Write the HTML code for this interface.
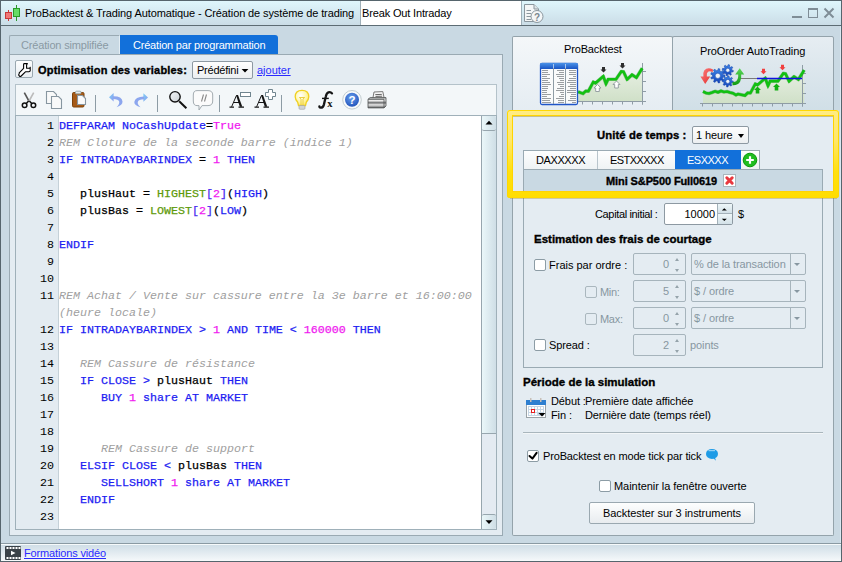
<!DOCTYPE html>
<html><head><meta charset="utf-8">
<style>
*{box-sizing:border-box;margin:0;padding:0}
html,body{width:842px;height:562px;overflow:hidden;background:#c9d9e3;font-family:"Liberation Sans",sans-serif;font-size:11px;color:#000}
.a{position:absolute}
.t{position:absolute;white-space:pre;line-height:13px;font-size:11px}
.b{font-weight:bold;-webkit-text-stroke:0.35px #000}
/* frame */
#frame{left:0;top:0;width:842px;height:562px;border:1px solid #56656d}
#title{left:1px;top:1px;width:840px;height:25px;background:linear-gradient(#dff6fc,#cbdde7);border-bottom:1px solid #5d6c74}
#tfield{left:360px;top:1px;width:162px;height:24px;background:#fff;border-left:1px solid #9fb0b9;border-right:1px solid #9fb0b9}
/* left panel */
#lpanel{left:9px;top:54px;width:494px;height:482px;background:#e4ecf2;border:1px solid #9aaab3}
#tab1{left:9px;top:35px;width:111px;height:19px;background:#c9d9e3;border:1px solid #9aaab3;border-bottom:none;border-right:1px solid #e3edf3;border-top-left-radius:2px}
#tab2{left:120px;top:35px;width:158px;height:19px;background:#1270da;border-top-right-radius:3px}
#wrench{left:15px;top:60px;width:18px;height:18px;border:1px solid #9aa8b0;border-radius:2px;background:linear-gradient(#fdfefe,#e9eef2)}
#dd1{left:192px;top:61px;width:61px;height:18px;border:1px solid #8d99a2;border-radius:2px;background:linear-gradient(#fefefe,#eceff1)}
#toolbar{left:15px;top:84px;width:482px;height:32px;background:#f3f7f9;border:1px solid #b4c2ca}
#editor{left:15px;top:115px;width:482px;height:415px;background:#fff;border:1px solid #9fb0b9}
#gutter{left:16px;top:116px;width:43px;height:413px;background:#e3ebf1;border-right:1px solid #c5d1d8}
#code{left:59px;top:116px;width:422px;height:413px;font-family:"Liberation Mono",monospace;font-size:11.67px}
.ln{position:absolute;left:16px;width:38px;text-align:right;white-space:pre;font-family:"Liberation Mono",monospace;font-size:11.67px;line-height:17px;color:#000}
.cl{position:absolute;left:59px;white-space:pre;font-family:"Liberation Mono",monospace;font-size:11.67px;line-height:17px;color:#000;-webkit-text-stroke:0.25px}
.kw{color:#1d1df2}.nm{color:#f019f0}.cm{color:#a0a0a0;font-style:italic;-webkit-text-stroke:0}.fn{color:#5e9a0a}.br{color:#4a2cf0}
#sb{left:481px;top:116px;width:15px;height:413px;background:#e4ebf2;border-left:1px solid #97a6ae}
/* right panel */
#rtab1{left:512px;top:36px;width:161px;height:80px;background:linear-gradient(#f4f7f9,#e4ecf2);border:1px solid #94a3ab;border-bottom:none;border-radius:2px 2px 0 0}
#rtab2{left:672px;top:36px;width:162px;height:80px;background:linear-gradient(#e6edf2,#cfdee6);border:1px solid #94a3ab;border-bottom:1px solid #94a3ab;border-radius:2px 2px 0 0}
#rpanel{left:512px;top:110px;width:322px;height:426px;background:#e4ecf2;border:1px solid #94a3ab;border-top:none;border-radius:0 0 2px 2px}
#yellow{left:507px;top:110px;width:332px;height:88px;border:6px solid #ffd90a;border-radius:3px}
.tri{width:0;height:0;border-left:3.5px solid transparent;border-right:3.5px solid transparent;border-top:4px solid #000}
/* status */
#status{left:1px;top:543px;width:840px;height:18px;background:linear-gradient(#f6fafb 0,#f6fafb 1px,#d0dee7 1px,#f3f7f9 16px,#fbfdfd 17px);border-top:1px solid #8a9aa3}

.cb{position:absolute;width:12px;height:12px;border:1px solid #8c9ca5;border-radius:2px;background:#fff}
.cbd{position:absolute;width:12px;height:12px;border:1px solid #aab7be;border-radius:2px;background:#e4ecf2}
.sp{position:absolute;width:53px;height:22px;border:1px solid #a6b4bc;border-radius:2px}
.spu{position:absolute;width:0;height:0;border-left:2.5px solid transparent;border-right:2.5px solid transparent;border-bottom:3px solid #95a3ab}
.spd{position:absolute;width:0;height:0;border-left:2.5px solid transparent;border-right:2.5px solid transparent;border-top:3px solid #95a3ab}
.ddd{position:absolute;width:115px;height:22px;border:1px solid #a6b4bc;border-radius:2px}
.dis{color:#8797a1}
</style></head><body>
<div class="a" id="frame"></div>
<div class="a" id="title"></div>
<div class="a" id="tfield"></div>
<div class="t" style="left:25px;top:7px;letter-spacing:-0.11px">ProBacktest &amp; Trading Automatique - Création de système de trading</div>
<div class="t" style="left:362px;top:7px;letter-spacing:-0.15px">Break Out Intraday</div>

<!--TITLEICONS-->
<svg class="a" style="left:4px;top:4px" width="18" height="18" viewBox="0 0 18 18">
 <line x1="4.5" y1="6" x2="4.5" y2="17" stroke="#c83a3a" stroke-width="1"/>
 <rect x="1.5" y="8.5" width="6" height="6" fill="#f07878" stroke="#c83a3a"/>
 <line x1="12.5" y1="1" x2="12.5" y2="17" stroke="#2a9a2a" stroke-width="1"/>
 <rect x="9.5" y="4.5" width="6" height="8" fill="#66dd66" stroke="#2a9a2a"/>
</svg>
<svg class="a" style="left:524px;top:4px" width="21" height="19" viewBox="0 0 21 19">
 <path d="M0.5 0.5 H10 L14.5 5 V17.5 H0.5 Z" fill="#f4f6f7" stroke="#8b979e"/>
 <path d="M10 0.5 V5 H14.5" fill="#dfe4e7" stroke="#8b979e"/>
 <line x1="2.5" y1="6.5" x2="7" y2="6.5" stroke="#8b979e"/>
 <line x1="2.5" y1="9.5" x2="7" y2="9.5" stroke="#8b979e"/>
 <line x1="2.5" y1="12.5" x2="7" y2="12.5" stroke="#8b979e"/>
 <line x1="2.5" y1="15.5" x2="7" y2="15.5" stroke="#8b979e"/>
 <circle cx="13" cy="12.5" r="6" fill="#f4f6f7" stroke="#8b979e"/>
 <text x="13" y="16.5" font-family="Liberation Sans" font-size="10" font-weight="bold" fill="#7b878e" text-anchor="middle">?</text>
</svg>
<div class="a" style="left:792px;top:16px;width:10px;height:2px;background:#7f8d96"></div>
<div class="a" style="left:808px;top:8px;width:10px;height:10px;border:1px solid #7f8d96;border-top-width:2px"></div>
<svg class="a" style="left:823px;top:7px" width="12" height="12" viewBox="0 0 12 12"><path d="M1.5 1.5 L10.5 10.5 M10.5 1.5 L1.5 10.5" stroke="#7f8d96" stroke-width="2"/></svg>

<div class="a" id="lpanel"></div>
<div class="a" id="tab1"></div>
<div class="a" id="tab2"></div>
<div class="t" style="left:21px;top:39px;color:#8a9aa4;letter-spacing:-0.16px">Création simplifiée</div>
<div class="t" style="left:133px;top:39px;color:#fff;letter-spacing:-0.2px">Création par programmation</div>
<div class="a" id="wrench"></div>
<div class="t b" style="left:38px;top:64px;letter-spacing:0.2px">Optimisation des variables:</div>
<div class="a" id="dd1"></div>
<div class="t" style="left:197px;top:64px;letter-spacing:-0.22px">Prédéfini</div>
<div class="t" style="left:257px;top:64px;color:#2a2aff;text-decoration:underline;text-underline-offset:1px">ajouter</div>
<div class="a" id="toolbar"></div>
<div class="a" id="editor"></div>
<div class="a" id="gutter"></div>
<div class="a" id="sb"></div>
<div class="a" style="left:482px;top:116px;width:14px;height:15px;border-bottom:1px solid #97a6ae;border-radius:2px;background:linear-gradient(90deg,#eaf7f9,#cfdee6)"></div>
<div class="a" style="left:482px;top:131px;width:14px;height:303px;border-bottom:1px solid #97a6ae;background:linear-gradient(90deg,#eaf7f9,#cfdee6)"></div>
<div class="a" style="left:482px;top:514px;width:14px;height:15px;border-top:1px solid #97a6ae;border-radius:2px;background:linear-gradient(90deg,#eaf7f9,#cfdee6)"></div>

<!--CODE-->
<div class="ln" style="top:118px">1</div>
<div class="cl" style="top:118px"><span class="kw">DEFPARAM NoCashUpdate</span>=<span class="nm">True</span></div>
<div class="ln" style="top:135px">2</div>
<div class="cl" style="top:135px"><span class="cm">REM Cloture de la seconde barre (indice 1)</span></div>
<div class="ln" style="top:152px">3</div>
<div class="cl" style="top:152px"><span class="kw">IF INTRADAYBARINDEX</span> = <span class="nm">1</span> <span class="kw">THEN</span></div>
<div class="ln" style="top:169px">4</div>
<div class="ln" style="top:186px">5</div>
<div class="cl" style="top:186px">   plusHaut = <span class="fn">HIGHEST</span><span class="br">[</span><span class="nm">2</span><span class="br">]</span>(<span class="kw">HIGH</span>)</div>
<div class="ln" style="top:203px">6</div>
<div class="cl" style="top:203px">   plusBas = <span class="fn">LOWEST</span><span class="br">[</span><span class="nm">2</span><span class="br">]</span>(<span class="kw">LOW</span>)</div>
<div class="ln" style="top:220px">7</div>
<div class="ln" style="top:237px">8</div>
<div class="cl" style="top:237px"><span class="kw">ENDIF</span></div>
<div class="ln" style="top:254px">9</div>
<div class="ln" style="top:271px">10</div>
<div class="ln" style="top:288px">11</div>
<div class="cl" style="top:288px"><span class="cm">REM Achat / Vente sur cassure entre la 3e barre et 16:00:00</span></div>
<div class="cl" style="top:305px"><span class="cm">(heure locale)</span></div>
<div class="ln" style="top:322px">12</div>
<div class="cl" style="top:322px"><span class="kw">IF INTRADAYBARINDEX &gt;</span> <span class="nm">1</span> <span class="kw">AND TIME &lt;</span> <span class="nm">160000</span> <span class="kw">THEN</span></div>
<div class="ln" style="top:339px">13</div>
<div class="ln" style="top:356px">14</div>
<div class="cl" style="top:356px">   <span class="cm">REM Cassure de résistance</span></div>
<div class="ln" style="top:373px">15</div>
<div class="cl" style="top:373px">   <span class="kw">IF CLOSE &gt;</span> plusHaut <span class="kw">THEN</span></div>
<div class="ln" style="top:390px">16</div>
<div class="cl" style="top:390px">      <span class="kw">BUY</span> <span class="nm">1</span> <span class="kw">share AT MARKET</span></div>
<div class="ln" style="top:407px">17</div>
<div class="ln" style="top:424px">18</div>
<div class="ln" style="top:441px">19</div>
<div class="cl" style="top:441px">      <span class="cm">REM Cassure de support</span></div>
<div class="ln" style="top:458px">20</div>
<div class="cl" style="top:458px">   <span class="kw">ELSIF CLOSE &lt;</span> plusBas <span class="kw">THEN</span></div>
<div class="ln" style="top:475px">21</div>
<div class="cl" style="top:475px">      <span class="kw">SELLSHORT</span> <span class="nm">1</span> <span class="kw">share AT MARKET</span></div>
<div class="ln" style="top:492px">22</div>
<div class="cl" style="top:492px">   <span class="kw">ENDIF</span></div>
<div class="ln" style="top:509px">23</div>
<!--/CODE-->

<div class="a" id="rtab2"></div>
<div class="a" id="rtab1"></div>
<div class="a" id="rpanel"></div>
<!--TABSVG-->
<svg class="a" style="left:0;top:0" width="842" height="120" viewBox="0 0 842 120"><defs><linearGradient id="gFill" x1="0" y1="0" x2="0" y2="1"><stop offset="0" stop-color="#e8f0e4"/><stop offset="1" stop-color="#d0e0c8"/></linearGradient><linearGradient id="gTblH" x1="0" y1="0" x2="0" y2="1"><stop offset="0" stop-color="#4a92e8"/><stop offset="1" stop-color="#1a55c4"/></linearGradient><linearGradient id="gGear" x1="0" y1="0" x2="0" y2="1"><stop offset="0" stop-color="#3d86e8"/><stop offset="1" stop-color="#1444b8"/></linearGradient><linearGradient id="gRed" x1="0" y1="0" x2="1" y2="1"><stop offset="0" stop-color="#ff8080"/><stop offset="1" stop-color="#e02a2a"/></linearGradient><linearGradient id="gGrn" x1="0" y1="0" x2="0" y2="1"><stop offset="0" stop-color="#5ad85a"/><stop offset="1" stop-color="#109a10"/></linearGradient></defs><polygon points="578.1,91.7 583.0,93.6 585.7,91.0 588.4,91.1 593.3,82.0 595.5,83.1 603.3,76.3 606.0,83.8 608.1,79.2 616.0,79.2 621.3,71.5 623.5,71.8 627.1,79.4 632.0,74.7 636.4,77.6 642.2,68.2 642.2,101 578.1,101" fill="url(#gFill)"/><path d="M578 101.5 H646 M642.5 63 V104.5 M642 71.5 H646 M642 81.5 H646 M642 91.5 H646 M582.5 101 V104.5 M592.5 101 V104.5 M602.5 101 V104.5 M612.5 101 V104.5 M622.5 101 V104.5 M632.5 101 V104.5 M642.5 101 V104.5" stroke="#8e9ca5" stroke-width="1" fill="none"/><polyline points="578.1,91.7 583.0,93.6 585.7,91.0 588.4,91.1 593.3,82.0 595.5,83.1 603.3,76.3 606.0,83.8 608.1,79.2 616.0,79.2 621.3,71.5 623.5,71.8 627.1,79.4 632.0,74.7 636.4,77.6 642.2,68.2" fill="none" stroke="#0a7a0a" stroke-width="3.6" stroke-linejoin="round" stroke-opacity="0.35"/><polyline points="578.1,91.7 583.0,93.6 585.7,91.0 588.4,91.1 593.3,82.0 595.5,83.1 603.3,76.3 606.0,83.8 608.1,79.2 616.0,79.2 621.3,71.5 623.5,71.8 627.1,79.4 632.0,74.7 636.4,77.6 642.2,68.2" fill="none" stroke="#12c012" stroke-width="2.6" stroke-linejoin="miter"/><path d="M602.0 67 H605.0 V69.5 H606.5 L603.5 72.5 L600.5 69.5 H602.0 Z" fill="#2e2e2e"/><path d="M621.0 63 H624.0 V65.5 H625.5 L622.5 68.5 L619.5 65.5 H621.0 Z" fill="#2e2e2e"/><path d="M597.5 84.5 L601.0 88.0 H599.3 V91.5 H595.7 V88.0 H594.0 Z" fill="#fff" stroke="#8d979c" stroke-width="0.9"/><path d="M616.5 81 L620.0 84.5 H618.3 V88 H614.7 V84.5 H613.0 Z" fill="#fff" stroke="#8d979c" stroke-width="0.9"/><rect x="540.5" y="63.5" width="37" height="41" rx="1.5" fill="#fafbfb" stroke="#1f55c8" stroke-width="1.3"/><rect x="540" y="63" width="38" height="6" rx="1.5" fill="url(#gTblH)"/><path d="M553.5 64 V104 M565.5 64 V104" stroke="#8e9ca5" stroke-width="1"/><path d="M553.5 64 V68 M565.5 64 V68" stroke="#a9c6ee" stroke-width="1"/><path d="M542 70.5 h6 M557 70.5 h7 M569 70.5 h7 M542 72.5 h6 M559 72.5 h5 M569 72.5 h7 M542 74.5 h8 M556 74.5 h8 M569 74.5 h7 M542 76.5 h5 M557 76.5 h7 M573 76.5 h3 M542 78.5 h8 M559 78.5 h5 M569 78.5 h7 M542 80.5 h6 M560 80.5 h4 M568 80.5 h8 M542 82.5 h8 M557 82.5 h7 M567 82.5 h9 M542 84.5 h9 M558 84.5 h6 M570 84.5 h6 M542 86.5 h6 M560 86.5 h4 M568 86.5 h8 M542 88.5 h6 M557 88.5 h7 M570 88.5 h6 M542 90.5 h5 M556 90.5 h8 M567 90.5 h9 M542 92.5 h5 M560 92.5 h4 M567 92.5 h9 M542 94.5 h9 M561 94.5 h3 M571 94.5 h5 M542 96.5 h5 M559 96.5 h5 M570 96.5 h6 M542 98.5 h9 M556 98.5 h8 M570 98.5 h6 M542 100.5 h8 M558 100.5 h6 M568 100.5 h8 M542 102.5 h9 M558 102.5 h6 M572 102.5 h4 " stroke="#8f9396" stroke-width="0.9"/><polygon points="703.0,91.5 706.0,93.0 709.0,93.5 712.0,92.5 715.0,91.3 718.0,92.3 721.0,91.0 724.0,92.0 727.0,91.5 730.0,92.5 733.0,93.2 736.0,95.0 738.0,94.0 745.0,95.5 747.7,92.9 750.4,93.0 755.3,83.9 757.5,85.0 765.3,78.2 768.0,85.7 770.1,81.1 778.0,81.1 783.3,73.4 785.5,73.7 789.1,81.3 794.0,76.6 798.4,79.5 804.2,70.1 804.2,103 703.0,103" fill="url(#gFill)"/><path d="M700 103.5 H806 M802.5 65 V106.5 M802 73.5 H806 M802 83.5 H806 M802 93.5 H806 M702.5 103 V106.5 M712.5 103 V106.5 M722.5 103 V106.5 M732.5 103 V106.5 M742.5 103 V106.5 M752.5 103 V106.5 M762.5 103 V106.5 M772.5 103 V106.5 M782.5 103 V106.5 M792.5 103 V106.5 M802.5 103 V106.5" stroke="#8e9ca5" stroke-width="1" fill="none"/><polyline points="703.0,91.5 706.0,93.0 709.0,93.5 712.0,92.5 715.0,91.3 718.0,92.3 721.0,91.0 724.0,92.0 727.0,91.5 730.0,92.5 733.0,93.2 736.0,95.0 738.0,94.0 745.0,95.5 747.7,92.9 750.4,93.0 755.3,83.9 757.5,85.0 765.3,78.2 768.0,85.7 770.1,81.1 778.0,81.1 783.3,73.4 785.5,73.7 789.1,81.3 794.0,76.6 798.4,79.5 804.2,70.1" fill="none" stroke="#0a7a0a" stroke-width="3.6" stroke-linejoin="round" stroke-opacity="0.35"/><polyline points="703.0,91.5 706.0,93.0 709.0,93.5 712.0,92.5 715.0,91.3 718.0,92.3 721.0,91.0 724.0,92.0 727.0,91.5 730.0,92.5 733.0,93.2 736.0,95.0 738.0,94.0 745.0,95.5 747.7,92.9 750.4,93.0 755.3,83.9 757.5,85.0 765.3,78.2 768.0,85.7 770.1,81.1 778.0,81.1 783.3,73.4 785.5,73.7 789.1,81.3 794.0,76.6 798.4,79.5 804.2,70.1" fill="none" stroke="#12c012" stroke-width="2.6" stroke-linejoin="miter"/><path d="M740 78.5 H757" stroke="#7a7a7a" stroke-width="1"/><path d="M757 78.5 H802" stroke="#1010e0" stroke-width="1.6"/><path d="M762.0 68.8 H765.0 V71.3 H766.5 L763.5 74.3 L760.5 71.3 H762.0 Z" fill="#f04040"/><path d="M781.0 64.8 H784.0 V67.3 H785.5 L782.5 70.3 L779.5 67.3 H781.0 Z" fill="#f04040"/><path d="M757.5 86.5 L761.0 90.0 H759.3 V93.5 H755.7 V90.0 H754.0 Z" fill="#10b010"/><path d="M776.5 83.5 L780.0 87.0 H778.3 V90.5 H774.7 V87.0 H773.0 Z" fill="#10b010"/><path d="M723.03 74.78 L724.95 74.92 L724.95 76.68 L723.03 76.82 L722.46 78.38 L723.84 79.72 L722.71 81.07 L721.15 79.94 L719.71 80.77 L719.91 82.69 L718.18 82.99 L717.71 81.13 L716.07 80.84 L714.99 82.43 L713.47 81.55 L714.30 79.82 L713.23 78.54 L711.38 79.07 L710.78 77.42 L712.54 76.63 L712.54 74.97 L710.78 74.18 L711.38 72.53 L713.23 73.06 L714.30 71.78 L713.47 70.05 L714.99 69.17 L716.07 70.76 L717.71 70.47 L718.18 68.61 L719.91 68.91 L719.71 70.83 L721.15 71.66 L722.71 70.53 L723.84 71.88 L722.46 73.22 Z" fill="url(#gGear)" stroke="#1540a8" stroke-width="0.5" stroke-linejoin="round"/><circle cx="717.8" cy="75.8" r="2.6" fill="#eef3f7" stroke="#1540a8" stroke-width="0.5"/><path d="M731.94 70.13 L733.39 70.55 L733.08 72.05 L731.59 71.87 L730.78 73.08 L731.50 74.40 L730.23 75.25 L729.30 74.06 L727.87 74.34 L727.45 75.79 L725.95 75.48 L726.13 73.99 L724.92 73.18 L723.60 73.90 L722.75 72.63 L723.94 71.70 L723.66 70.27 L722.21 69.85 L722.52 68.35 L724.01 68.53 L724.82 67.32 L724.10 66.00 L725.37 65.15 L726.30 66.34 L727.73 66.06 L728.15 64.61 L729.65 64.92 L729.47 66.41 L730.68 67.22 L732.00 66.50 L732.85 67.77 L731.66 68.70 Z" fill="url(#gGear)" stroke="#1540a8" stroke-width="0.5" stroke-linejoin="round"/><circle cx="727.8" cy="70.2" r="2.0" fill="#eef3f7" stroke="#1540a8" stroke-width="0.5"/><path d="M731.92 80.92 L733.40 81.19 L733.24 82.72 L731.74 82.69 L731.05 83.97 L731.91 85.21 L730.72 86.18 L729.67 85.10 L728.28 85.52 L728.01 87.00 L726.48 86.84 L726.51 85.34 L725.23 84.65 L723.99 85.51 L723.02 84.32 L724.10 83.27 L723.68 81.88 L722.20 81.61 L722.36 80.08 L723.86 80.11 L724.55 78.83 L723.69 77.59 L724.88 76.62 L725.93 77.70 L727.32 77.28 L727.59 75.80 L729.12 75.96 L729.09 77.46 L730.37 78.15 L731.61 77.29 L732.58 78.48 L731.50 79.53 Z" fill="url(#gGear)" stroke="#1540a8" stroke-width="0.5" stroke-linejoin="round"/><circle cx="727.8" cy="81.4" r="2.0" fill="#eef3f7" stroke="#1540a8" stroke-width="0.5"/><path d="M713 69.5 Q707.5 66.5 704.2 70.5 Q702.8 72.5 703.4 76.5 L700.4 76.5 L705.2 84 L710.2 76.5 L706.8 76.5 Q706.4 73 708 71.8 Q710 70.4 712.6 72.2 Z" fill="url(#gRed)"/><path d="M732.5 82 Q736.6 82.4 737.8 78.5 Q738.4 76.5 738.2 74.5 L735.2 74.5 L739.7 68.2 L744.2 74.5 L741.2 74.5 Q741.6 78.5 740.2 81.5 Q738 85.5 732.5 85.2 Z" fill="url(#gGrn)"/></svg>
<!--/TABSVG-->

<!--RIGHT-->
<div class="t" style="left:564px;top:43px;letter-spacing:-0.15px">ProBacktest</div>
<div class="t" style="left:700px;top:45px;letter-spacing:-0.1px">ProOrder AutoTrading</div>
<div class="t b" style="left:597px;top:129px;font-size:11.3px;letter-spacing:0.1px">Unité de temps :</div>
<div class="a" id="dd2" style="left:692px;top:126px;width:57px;height:18px;border:1px solid #8d99a2;border-radius:2px;background:linear-gradient(#fefefe,#eceff1)"></div>
<div class="t" style="left:696px;top:129px;letter-spacing:-0.1px">1 heure</div>
<div class="a tri" style="left:738px;top:134px"></div>
<!-- instrument tabs -->
<div class="a" style="left:523px;top:150px;width:300px;height:20px;border:1px solid #9aaab3;border-bottom:none;background:linear-gradient(#fdfefe,#eef2f4)"></div>
<div class="a" style="left:597px;top:151px;width:1px;height:18px;background:#b9c5cc"></div>
<div class="a" style="left:675px;top:150px;width:66px;height:19px;background:#1270da"></div>
<div class="a" style="left:759px;top:150px;width:64px;height:19px;background:#e4ecf2;border-left:1px solid #9aaab3"></div>
<div class="t" style="left:536px;top:154px;letter-spacing:-0.4px">DAXXXXX</div>
<div class="t" style="left:610px;top:154px;letter-spacing:-0.55px">ESTXXXXX</div>
<div class="t" style="left:687px;top:154px;letter-spacing:-0.5px;color:#fff">ESXXXX</div>
<div class="a" style="left:523px;top:169px;width:300px;height:199px;background:#e4ecf2;border:1px solid #9aaab3"></div>
<div class="a" style="left:524px;top:170px;width:298px;height:22px;background:#c9d9e3"></div>
<div class="t b" style="left:606px;top:175px;letter-spacing:-0.1px">Mini S&amp;P500 Full0619</div>
<div class="a" id="xbtn" style="left:723px;top:174px;width:13px;height:13px;background:#fff;border:1px solid #a9b5bc"></div>
<svg class="a" style="left:0;top:0" width="842" height="210" viewBox="0 0 842 210"><defs><linearGradient id="gY" x1="0" y1="110" x2="0" y2="198" gradientUnits="userSpaceOnUse"><stop offset="0" stop-color="#ffec84"/><stop offset="0.35" stop-color="#ffe76a"/><stop offset="0.7" stop-color="#ffe010"/><stop offset="1" stop-color="#ffdd00"/></linearGradient></defs>
<path d="M509.5 110 H836.5 Q839 110 839 112.5 V195.5 Q839 198 836.5 198 H509.5 Q507 198 507 195.5 V112.5 Q507 110 509.5 110 Z M513 116 V191 H833 V116 Z" fill="url(#gY)" fill-rule="evenodd"/>
<rect x="507.5" y="110.5" width="331" height="87" rx="2.5" fill="none" stroke="#ffd800" stroke-width="1"/>
<rect x="512.5" y="115.5" width="321" height="76" fill="none" stroke="#ffd400" stroke-width="1"/>
<path d="M513 116.5 H833" stroke="#a08a10" stroke-opacity="0.45" stroke-width="1"/>
<path d="M510 198.5 H837" stroke="#a08a10" stroke-opacity="0.35" stroke-width="1"/>
</svg>
<!-- capital -->
<div class="t" style="left:595px;top:208px;letter-spacing:-0.35px">Capital initial :</div>
<div class="a" style="left:664px;top:203px;width:69px;height:22px;border:1px solid #8d99a2;border-radius:2px;background:#fff"></div>
<div class="a" style="left:717px;top:204px;width:15px;height:10px;border-left:1px solid #a3b1b9;border-bottom:1px solid #a3b1b9;background:linear-gradient(#eef7f9,#d3e1e8)"></div>
<div class="a" style="left:717px;top:214px;width:15px;height:10px;border-left:1px solid #a3b1b9;background:linear-gradient(#eef7f9,#d3e1e8)"></div>
<div class="t" style="left:684px;top:208px;width:31px;text-align:right">10000</div>
<div class="t" style="left:738px;top:208px">$</div>
<div class="t b" style="left:534px;top:233px;font-size:11.5px">Estimation des frais de courtage</div>
<div class="cb" style="left:534px;top:259px"></div>
<div class="t" style="left:549px;top:259px;letter-spacing:0px">Frais par ordre :</div>
<div class="sp" style="left:633px;top:253px"></div>
<div class="t dis" style="left:640px;top:258px;width:29px;text-align:right">0</div>
<div class="spu" style="left:675px;top:258px"></div><div class="spd" style="left:675px;top:269px"></div>
<div class="ddd" style="left:691px;top:253px"></div>
<div class="a" style="left:790px;top:254px;width:1px;height:20px;background:#a6b4bc"></div>
<div class="a tri" style="left:794px;top:263px;border-top-color:#8797a1;border-left-width:3.5px;border-right-width:3.5px;border-top-width:3px"></div>
<div class="t dis" style="left:694px;top:258px;letter-spacing:-0.1px">% de la transaction</div>
<div class="cbd" style="left:585px;top:286px"></div>
<div class="t" style="left:600px;top:286px;letter-spacing:-0.3px;color:#8797a1">Min:</div>
<div class="sp" style="left:633px;top:280px"></div>
<div class="t dis" style="left:640px;top:285px;width:29px;text-align:right">5</div>
<div class="spu" style="left:675px;top:285px"></div><div class="spd" style="left:675px;top:296px"></div>
<div class="ddd" style="left:691px;top:280px"></div>
<div class="a" style="left:790px;top:281px;width:1px;height:20px;background:#a6b4bc"></div>
<div class="a tri" style="left:794px;top:290px;border-top-color:#8797a1;border-left-width:3.5px;border-right-width:3.5px;border-top-width:3px"></div>
<div class="t dis" style="left:694px;top:285px;letter-spacing:-0.1px">$ / ordre</div>
<div class="cbd" style="left:585px;top:313px"></div>
<div class="t" style="left:600px;top:313px;letter-spacing:-0.3px;color:#8797a1">Max:</div>
<div class="sp" style="left:633px;top:307px"></div>
<div class="t dis" style="left:640px;top:312px;width:29px;text-align:right">0</div>
<div class="spu" style="left:675px;top:312px"></div><div class="spd" style="left:675px;top:323px"></div>
<div class="ddd" style="left:691px;top:307px"></div>
<div class="a" style="left:790px;top:308px;width:1px;height:20px;background:#a6b4bc"></div>
<div class="a tri" style="left:794px;top:317px;border-top-color:#8797a1;border-left-width:3.5px;border-right-width:3.5px;border-top-width:3px"></div>
<div class="t dis" style="left:694px;top:312px;letter-spacing:-0.1px">$ / ordre</div>
<div class="cb" style="left:534px;top:339px"></div>
<div class="t" style="left:549px;top:339px;letter-spacing:-0.1px">Spread :</div>
<div class="sp" style="left:633px;top:334px"></div>
<div class="t dis" style="left:640px;top:339px;width:29px;text-align:right">2</div>
<div class="spu" style="left:675px;top:339px"></div><div class="spd" style="left:675px;top:350px"></div>
<div class="t dis" style="left:690px;top:339px;letter-spacing:-0.1px">points</div>

<div class="t b" style="left:523px;top:376px;font-size:11.5px">Période de la simulation</div>
<div class="a" id="cal" style="left:526px;top:398px;width:20px;height:21px"></div>
<div class="t" style="left:551px;top:395px;letter-spacing:-0.1px">Début :</div>
<div class="t" style="left:585px;top:395px;letter-spacing:-0.1px">Première date affichée</div>
<div class="t" style="left:551px;top:409px;letter-spacing:-0.1px">Fin :</div>
<div class="t" style="left:585px;top:409px;letter-spacing:-0.1px">Dernière date (temps réel)</div>
<div class="a" style="left:523px;top:432px;width:300px;height:1px;background:#a9b6bd"></div>
<div class="a" style="left:523px;top:433px;width:300px;height:1px;background:#f3f6f8"></div>
<div class="cb" style="left:527px;top:450px"></div>
<div class="t" style="left:543px;top:450px;letter-spacing:-0.15px">ProBacktest en mode tick par tick</div>
<div class="cb" style="left:599px;top:480px"></div>
<div class="t" style="left:614px;top:480px;letter-spacing:-0.05px">Maintenir la fenêtre ouverte</div>
<div class="a" style="left:589px;top:502px;width:166px;height:22px;border:1px solid #9aa8b0;border-radius:2px;background:linear-gradient(#fdfefe,#e8ecef)"></div>
<div class="t" style="left:603px;top:507px;letter-spacing:-0.05px">Backtester sur 3 instruments</div>
<!--/RIGHT-->

<div class="a" style="left:840px;top:26px;width:1px;height:517px;background:#dbe8f1"></div>
<div class="a" id="status"></div>
<div class="t" style="left:24px;top:547px;color:#2a2aff;text-decoration:underline;text-underline-offset:1px;letter-spacing:-0.15px">Formations vidéo</div>
<!--TOOLSVG-->
<svg class="a" style="left:0;top:0" width="842" height="562" viewBox="0 0 842 562">
 <defs>
  <linearGradient id="gBlue" x1="0" y1="0" x2="1" y2="1"><stop offset="0" stop-color="#7fd0f4"/><stop offset="1" stop-color="#8a9cf0"/></linearGradient>
  <linearGradient id="gMag" x1="0" y1="0" x2="1" y2="1"><stop offset="0" stop-color="#f4f6f8"/><stop offset="1" stop-color="#c9cfd3"/></linearGradient>
  <radialGradient id="gHelp" cx="0.45" cy="0.35" r="0.7"><stop offset="0" stop-color="#6aa0ee"/><stop offset="1" stop-color="#1d4fb8"/></radialGradient>
  <linearGradient id="gPrn" x1="0" y1="0" x2="0" y2="1"><stop offset="0" stop-color="#a8aaab"/><stop offset="0.3" stop-color="#f0f0f0"/><stop offset="0.5" stop-color="#6d6f70"/><stop offset="0.7" stop-color="#e8e8e8"/><stop offset="1" stop-color="#5e6061"/></linearGradient>
 </defs>
 <!-- wrench -->
 <path d="M19.2 72.8 L23.6 68.4 L23.6 64.4 Q23.6 63.6 24.4 63.6 L27.4 63.6 L26.6 65 L26.6 68.2 L29.8 68.2 L30.2 67.3 L30.2 70.6 Q30.2 71.8 29 71.8 L25.4 71.8 L21.2 76 Q20.3 76.9 19.4 76 L19.1 75.7 Q18.2 74.8 19.2 73.8 Z" fill="#fff" stroke="#000" stroke-width="1.1" stroke-linejoin="round"/>
 <!-- scissors -->
 <path d="M24.3 92.6 L29.2 101.5" stroke="#555" stroke-width="1.6"/>
 <path d="M33.7 92.6 L28.8 101.5" stroke="#bbb" stroke-width="1.6"/>
 <circle cx="24.6" cy="105.2" r="2.3" fill="none" stroke="#111" stroke-width="1.5"/>
 <circle cx="33.4" cy="105.2" r="2.3" fill="none" stroke="#111" stroke-width="1.5"/>
 <path d="M26.3 103.5 L28.6 101 M31.7 103.5 L29.4 101" stroke="#111" stroke-width="1.5"/>
 <!-- copy -->
 <path d="M46.5 91.5 H53.5 L56.5 94.5 V103.5 H46.5 Z" fill="#f8f9f9" stroke="#8796a0" stroke-width="1.1"/>
 <path d="M51.5 96.5 H58.5 L61.5 99.5 V108.5 H51.5 Z" fill="#f8f9f9" stroke="#8796a0" stroke-width="1.1"/>
 <!-- paste -->
 <rect x="72.5" y="92.5" width="11.5" height="14.5" rx="1.2" fill="#a65a17" stroke="#7c4209"/>
 <rect x="75.5" y="91.2" width="5.5" height="2.6" rx="1" fill="#e8eaeb" stroke="#9aa"/>
 <path d="M77.5 95.5 H82.5 L85.5 98.5 V104.5 H77.5 Z" fill="#fafafa" stroke="#8796a0" stroke-width="1.1"/>
 <!-- separators -->
 <rect x="95" y="95" width="1" height="17" fill="#8d9ca5"/>
 <rect x="157" y="95" width="1" height="17" fill="#8d9ca5"/>
 <rect x="219" y="95" width="1" height="17" fill="#8d9ca5"/>
 <rect x="281" y="95" width="1" height="17" fill="#8d9ca5"/>
 <!-- undo -->
 <path d="M109 97.2 L113.6 93 L113.6 101.6 Z" fill="url(#gBlue)"/>
 <path d="M113 96.2 Q122 96 122.5 101.5 Q122.8 105 116.5 107.2 Q119.8 104 119.2 101.5 Q118.5 99 113 99 Z" fill="#8ca6ee"/>
 <!-- redo -->
 <path d="M148 97.4 L143.4 93.2 L143.4 101.8 Z" fill="url(#gBlue)"/>
 <path d="M144 96.4 Q135 96.5 134.3 102 Q134.2 105.5 140.5 107.2 Q137.2 104.5 137.8 102 Q138.5 99.2 144 99.2 Z" fill="#8ca6ee"/>
 <!-- magnifier -->
 <circle cx="175" cy="96.8" r="5.2" fill="url(#gMag)" stroke="#111" stroke-width="1.4"/>
 <path d="M179.2 101.3 L186.4 108.2" stroke="#111" stroke-width="2"/>
 <!-- comment bubble -->
 <path d="M197 90.6 H208 Q212.7 90.6 212.7 95 V101 Q212.7 105.6 208 105.6 H202 L199 110 L199 105.6 H197 Q193.3 105.6 193.3 101 V95 Q193.3 90.6 197 90.6 Z" fill="#fbfbfb" stroke="#a3acb1" stroke-width="1"/>
 <path d="M201.5 101.5 L203.5 94.5 M204.5 101.5 L206.5 94.5" stroke="#8a8a8a" stroke-width="1.1"/>
 <!-- A- A+ -->
 <path d="M236 95 L238 95 L242.3 106.8 L239.8 106.8 Z" fill="#151515"/><path d="M236.4 95.6 L231.6 106.8" stroke="#151515" stroke-width="1"/><path d="M233.5 102.5 H240" stroke="#151515" stroke-width="1"/><path d="M229.5 107.1 H234 M238.5 107.1 H244" stroke="#151515" stroke-width="1.2"/>
 <rect x="240.5" y="92.5" width="10" height="4" fill="#fff" stroke="#70858f"/>
 <path d="M261 95 L263 95 L267.3 106.8 L264.8 106.8 Z" fill="#151515"/><path d="M261.4 95.6 L256.6 106.8" stroke="#151515" stroke-width="1"/><path d="M258.5 102.5 H265" stroke="#151515" stroke-width="1"/><path d="M254.5 107.1 H259 M263.5 107.1 H269" stroke="#151515" stroke-width="1.2"/>
 <path d="M268.5 89.5 H272.5 V92.5 H275.5 V96.5 H272.5 V99.5 H268.5 V96.5 H265.5 V92.5 H268.5 Z" fill="#fff" stroke="#70858f"/>
 <!-- bulb -->
 <radialGradient id="gBulb" cx="0.4" cy="0.35" r="0.7"><stop offset="0" stop-color="#ffffff"/><stop offset="0.6" stop-color="#fff6a8"/><stop offset="1" stop-color="#ffe860"/></radialGradient>
 <path d="M302 90.3 Q308.8 90.3 308.8 96.8 Q308.8 99.5 306.3 102.3 L305.5 105.5 H298.5 L297.7 102.3 Q295.2 99.5 295.2 96.8 Q295.2 90.3 302 90.3 Z" fill="url(#gBulb)" stroke="#f0d020" stroke-width="1.3"/>
 <path d="M299.3 97.2 L301 99.2 V105 M304.7 97.2 L303 99.2 V105 M299.5 97.5 H304.5" stroke="#ecd040" stroke-width="1" fill="none"/>
 <rect x="299" y="105.5" width="6" height="3.8" rx="1" fill="#d0d3d5" stroke="#9ca0a2" stroke-width="0.6"/>
 <!-- fx -->
 <path d="M332 93.4 Q330.6 91.6 328.4 92.3 Q326.5 93 325.8 96.5 L323.9 104.6 Q323 107.9 320.6 107.7 Q319.2 107.5 319.4 106.3" fill="none" stroke="#151515" stroke-width="2.3" stroke-linecap="round"/>
 <path d="M322 98.4 H328.8" stroke="#151515" stroke-width="1.4"/>
 <text x="327.2" y="107.2" font-family="Liberation Serif" font-weight="bold" font-size="10.5" fill="#151515">x</text>
 <!-- help -->
 <circle cx="352" cy="99.8" r="9.3" fill="#f8fafb" stroke="#c2ccd0" stroke-width="1"/>
 <circle cx="352" cy="99.8" r="7" fill="url(#gHelp)"/>
 <text x="352" y="104.3" font-family="Liberation Sans" font-weight="bold" font-size="11.5" fill="#fff" text-anchor="middle">?</text>
 <!-- printer -->
 <path d="M374 92 L382.8 91.6 L384.2 98.2 L372.8 98.6 Z" fill="#f6f6f6" stroke="#6a6a6a" stroke-width="0.9"/>
 <path d="M375.3 94.6 L381.8 94.4 M375.5 96.4 L382.2 96.2" stroke="#555" stroke-width="0.9"/>
 <path d="M368 99.2 L370.2 97.6 H386 V106 L384 107.9 H368 Z" fill="url(#gPrn)" stroke="#4e5050" stroke-width="0.8"/>
 <path d="M384 99.4 V107.6 M368.2 99.3 H384" stroke="#4e5050" stroke-width="0.8" fill="none"/>
 <!-- dropdown triangles -->
 <path d="M241.6 69 H248.4 L245 72.4 Z" fill="#000"/>
 <!-- film -->
 <rect x="5" y="546" width="16" height="14" rx="1" fill="#3a4248"/>
 <g fill="#fff"><rect x="6.5" y="547" width="2" height="2"/><rect x="9.5" y="547" width="2" height="2"/><rect x="12.5" y="547" width="2" height="2"/><rect x="15.5" y="547" width="2" height="2"/><rect x="18.5" y="547" width="2" height="2"/>
 <rect x="6.5" y="557" width="2" height="2"/><rect x="9.5" y="557" width="2" height="2"/><rect x="12.5" y="557" width="2" height="2"/><rect x="15.5" y="557" width="2" height="2"/><rect x="18.5" y="557" width="2" height="2"/>
 <path d="M11 550.8 L15.5 553 L11 555.2 Z"/></g>
 <!-- calendar -->
 <rect x="526.5" y="400.5" width="19" height="17" fill="#fff" stroke="#9aa3a8"/>
 <rect x="526" y="400" width="20" height="5" fill="#2e7fd0"/>
 <rect x="530" y="398" width="1.5" height="4" fill="#c8c0b8"/><rect x="540" y="398" width="1.5" height="4" fill="#c8c0b8"/>
 <g fill="#c6d6e4"><rect x="528" y="406" width="16" height="10"/></g>
 <g fill="#fff">
  <rect x="529" y="407" width="2" height="2"/><rect x="532" y="407" width="2" height="2"/><rect x="535" y="407" width="2" height="2"/><rect x="538" y="407" width="2" height="2"/><rect x="541" y="407" width="2" height="2"/>
  <rect x="529" y="410" width="2" height="2"/><rect x="535" y="410" width="2" height="2"/><rect x="538" y="410" width="2" height="2"/><rect x="541" y="410" width="2" height="2"/>
  <rect x="529" y="413" width="2" height="2"/><rect x="532" y="413" width="2" height="2"/><rect x="535" y="413" width="2" height="2"/>
 </g>
 <rect x="531.5" y="409.5" width="3" height="3" fill="#fff" stroke="#e82020"/>
 <path d="M538.5 413 H545.5 L542 416.5 Z" fill="#000"/>
 <!-- check -->
 <path d="M529.5 456 L532.4 458.6 L536.6 452.8" fill="none" stroke="#000" stroke-width="2" stroke-linejoin="round" stroke-linecap="round"/>
 <!-- bubble -->
 <ellipse cx="712" cy="453.9" rx="6" ry="5" fill="#1e9be6"/>
 <path d="M712 457 L716 460.8 L714.5 456 Z" fill="#1e9be6"/>
 <rect x="708.5" y="450" width="6.5" height="1.2" fill="#8fd0f6"/>
 <!-- green plus -->
 <circle cx="750" cy="160" r="6.8" fill="#1fbd1f" stroke="#0b980b" stroke-width="1"/>
 <path d="M746.2 160 H753.8 M750 156.2 V163.8" stroke="#fff" stroke-width="2.2"/>
 <!-- red x -->
 <path d="M726.8 177.8 L732.2 183.2 M732.2 177.8 L726.8 183.2" stroke="#e8383f" stroke-width="3" stroke-linecap="round"/>
 <!-- capital spinner arrows -->
 <path d="M721.8 210.5 L724.3 208.3 L726.8 210.5 Z" fill="#000"/>
 <path d="M721.8 218.8 L724.3 221 L726.8 218.8 Z" fill="#000"/>
 <!-- scrollbar arrows -->
 <path d="M485.5 124.5 L489 120.8 L492.5 124.5 Z" fill="#000"/>
 <path d="M485.5 520.2 L489 524 L492.5 520.2 Z" fill="#000"/>
</svg>
<!--/TOOLSVG-->
</body></html>
